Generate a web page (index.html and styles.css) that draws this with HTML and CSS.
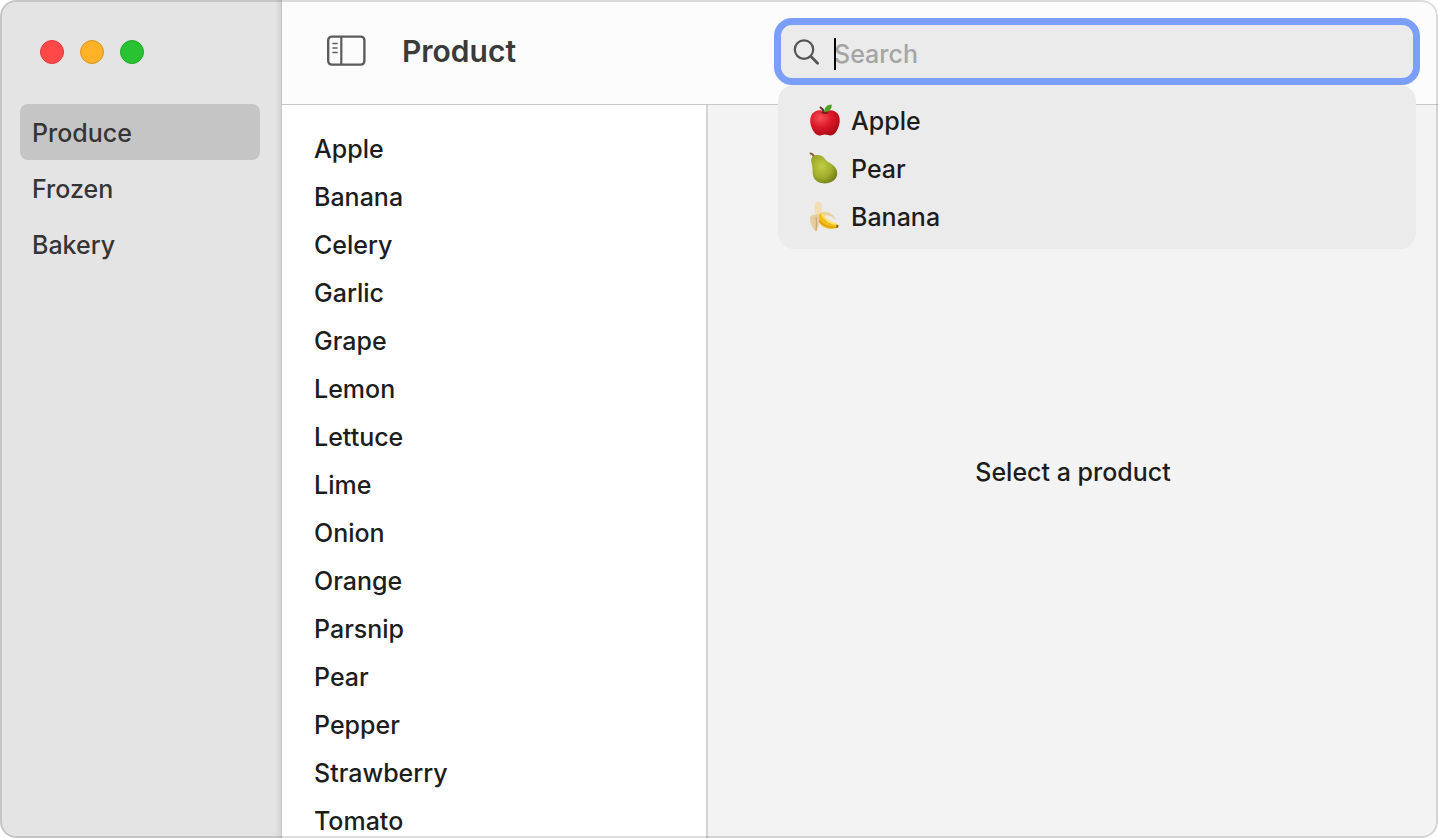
FILE: index.html
```html
<!DOCTYPE html>
<html lang="en">
<head>
    <meta charset="UTF-8">
    <meta name="viewport" content="width=device-width, initial-scale=1.0">
    <title>Product</title>
    <link rel="stylesheet" href="styles.css">
</head>
<body>
    <div class="window">
        <!-- Sidebar with the window buttons and departments -->
        <aside class="sidebar">
            <div class="window-buttons">
                <button class="dot dot-close" aria-label="Close"></button>
                <button class="dot dot-minimize" aria-label="Minimize"></button>
                <button class="dot dot-zoom" aria-label="Zoom"></button>
            </div>
            <nav class="departments">
                <a href="#produce" class="department selected">Produce</a>
                <a href="#frozen" class="department">Frozen</a>
                <a href="#bakery" class="department">Bakery</a>
            </nav>
        </aside>

        <main class="main">
            <!-- Toolbar -->
            <header class="toolbar">
                <button class="toggle-btn" aria-label="Toggle sidebar">
                    <svg width="40" height="32" viewBox="0 0 40 32" fill="none" stroke="#5c5c5c">
                        <rect x="2.2" y="1.6" width="36.2" height="28" rx="3.6" stroke-width="2.4"/>
                        <path d="M15.3 2v27.5" stroke-width="2.2"/>
                        <path d="M7 8.5h4M7 13h4M7 17.5h4" stroke-width="1.6" stroke-linecap="round"/>
                    </svg>
                </button>
                <h1 class="title">Product</h1>
                <div class="search">
                    <label class="search-field">
                        <svg class="search-icon" width="28" height="28" viewBox="0 0 28 28" fill="none" stroke="#555" stroke-linecap="round">
                            <circle cx="11" cy="11.6" r="9.2" stroke-width="2.2"/>
                            <path d="M18 18.6l6.6 6.6" stroke-width="2.8"/>
                        </svg>
                        <span class="caret"></span>
                        <input type="text" class="search-input" placeholder="Search" aria-label="Search">
                    </label>
                    <!-- Suggestions -->
                    <ul class="suggestions">
                        <li>
                            <svg width="32" height="34" viewBox="0 0 32 34">
                                <defs>
                                    <radialGradient id="appleRed" cx=".35" cy=".3" r=".75">
                                        <stop offset="0" stop-color="#f8505a"/>
                                        <stop offset=".5" stop-color="#dc1828"/>
                                        <stop offset="1" stop-color="#a90914"/>
                                    </radialGradient>
                                </defs>
                                <path d="M16 8C12 5 6 6 3 10c-3 5-2 12 2 18 3 4 6 4 8 3 2-.8 4-.8 6 0 3 1 6 0 8-3 4-6 5-13 2-18-3-4-9-5-13-2z" fill="url(#appleRed)"/>
                                <path d="M12 8.500c2 2 6 2 8 0-2-1.500-6-1.500-8 0z" fill="#96101a"/>
                                <path d="M15 9c0-2.500-1-4-3.500-5.500" fill="none" stroke="#5b3226" stroke-width="2" stroke-linecap="round"/>
                                <path d="M15.500 8C15 4 18 .5 22.500.5c1 4-2 7-7 7.500z" fill="#4aa526"/>
                            </svg>
                            Apple
                        </li>
                        <li>
                            <svg width="32" height="34" viewBox="0 0 32 34">
                                <defs>
                                    <radialGradient id="pearGreen" cx=".4" cy=".4" r=".65">
                                        <stop offset="0" stop-color="#c3cd44"/>
                                        <stop offset=".6" stop-color="#a0ad2b"/>
                                        <stop offset="1" stop-color="#74821b"/>
                                    </radialGradient>
                                </defs>
                                <path d="M1.500 1.500c1.500 0 2.500 1 3.500 3" fill="none" stroke="#90553a" stroke-width="2" stroke-linecap="round"/>
                                <path d="M4 4c4-2 10-1 12 3 2 3 6 4 9 7 5 5 4 12-1 15-6 4-16 3-19-3-2-4-1-8-2-13C2.500 10 1 7 4 4z" fill="url(#pearGreen)"/>
                            </svg>
                            Pear
                        </li>
                        <li>
                            <svg width="32" height="34" viewBox="0 0 32 34">
                                <path d="M11 13c5-3 13 0 16.500 7-5-4-9-6-15-4z" fill="#ead099"/>
                                <path d="M7 15C5 10 5 6 6.500 3 8 1.500 11 1.500 12 3c1 4 1 8 0 13z" fill="#f2deb2"/>
                                <path d="M9 15c-1 6 2 11 8 13 5 1.500 9 1.200 12-1 .8-.8.500-2-.5-2.700C22 25 17 21 12.500 13z" fill="#f0bd1d"/>
                                <path d="M10 20c4 6 10 8 18 7" fill="none" stroke="#d79712" stroke-width="1.200"/>
                                <path d="M13 14c3 6 8 9 14 10" fill="none" stroke="#ffe166" stroke-width="2"/>
                                <path d="M27.500 25l2 .5-.5 2-1.500.5z" fill="#745521"/>
                                <path d="M10 15c-4-1-8 0-9 2 0 6 2 11 6 14.500 2-4 4-9 3-16.500z" fill="#e6cc9d"/>
                                <path d="M7 17c1 5 1 9 0 14" fill="none" stroke="#cda970" stroke-width="1.200"/>
                            </svg>
                            Banana
                        </li>
                    </ul>
                </div>
            </header>

            <!-- Product list and detail -->
            <div class="content">
                <ul class="products">
                    <li>Apple</li>
                    <li>Banana</li>
                    <li>Celery</li>
                    <li>Garlic</li>
                    <li>Grape</li>
                    <li>Lemon</li>
                    <li>Lettuce</li>
                    <li>Lime</li>
                    <li>Onion</li>
                    <li>Orange</li>
                    <li>Parsnip</li>
                    <li>Pear</li>
                    <li>Pepper</li>
                    <li>Strawberry</li>
                    <li>Tomato</li>
                </ul>
                <section class="detail">Select a product</section>
            </div>
        </main>
    </div>
</body>
</html>
```
FILE: styles.css
```css
* { box-sizing: border-box; }
body { margin: 0; background: #fff; font-family: Inter, "Liberation Sans", sans-serif; font-size: 25px; font-weight: 450; color: #1d1d1d; }
ul { list-style: none; margin: 0; padding: 0; }
button { border: none; padding: 0; background: none; }

.window { position: relative; display: flex; height: 100vh; border-radius: 16px; overflow: hidden; }
/* outline above the content */
.window::after { content: ""; position: absolute; inset: 0; border: 2px solid rgba(0, 0, 0, 0.13); border-radius: 16px; pointer-events: none; }

.sidebar { flex: 0 0 282px; padding: 40px 21px 40px 20px; background: linear-gradient(to left, #d4d4d4, #e4e4e4 6px); border-right: 1px solid #c6c6c6; }
.window-buttons { display: flex; gap: 16px; padding: 0 20px; }
.dot { width: 24px; height: 24px; border-radius: 50%; }
.dot-close { background: #ff4848; border: 1px solid #e0383a; }
.dot-minimize { background: #ffb127; border: 1px solid #db9426; }
.dot-zoom { background: #29c232; border: 1px solid #1fa828; }
.departments { margin-top: 40px; }
.department { display: flex; align-items: center; height: 56px; padding: 2px 12px 0; border-radius: 8px; color: #353535; text-decoration: none; }
.selected { background: #c5c5c5; }

.main { flex: 1; min-width: 0; display: flex; flex-direction: column; }
.toolbar { flex: none; display: flex; align-items: center; height: 105px; padding: 0 18px 2px 44px; background: #fcfcfc; border-bottom: 1px solid #c8c8c8; }
.toggle-btn { display: flex; }
.title { margin: 0; padding-left: 36px; font-size: 30px; font-weight: 600; color: #3a3a3a; }

.search { position: relative; width: 646px; margin-left: auto; }
.search-field { position: relative; display: flex; align-items: center; height: 67px; padding: 2px 12px 0; background: #ebebeb; border: 7px solid #7b9ff8; border-radius: 18px; }
.search-icon { flex: none; }
.search-input { flex: 1; min-width: 0; margin-left: 13px; padding: 4px 0 0; border: none; outline: none; background: none; font: inherit; color: #1d1d1d; }
.search-input::placeholder { color: #a5a5a5; opacity: 1; }
.caret { position: absolute; left: 53px; top: 13px; width: 2px; height: 32px; background: #000; }

.suggestions { position: absolute; z-index: 1; top: 100%; left: 4px; right: 4px; padding: 12px 31px 8px; background: #ebebeb; border-radius: 16px; }
.suggestions li { display: flex; align-items: center; gap: 10px; height: 48px; }

.content { flex: 1; min-height: 0; display: flex; }
.products { flex: 0 0 426px; padding: 20px 32px 0; overflow: hidden; background: #fff; border-right: 2px solid #d4d4d4; }
.products li { height: 48px; line-height: 48px; }
.detail { flex: 1; display: flex; align-items: center; justify-content: center; background: #f3f3f3; }
```
